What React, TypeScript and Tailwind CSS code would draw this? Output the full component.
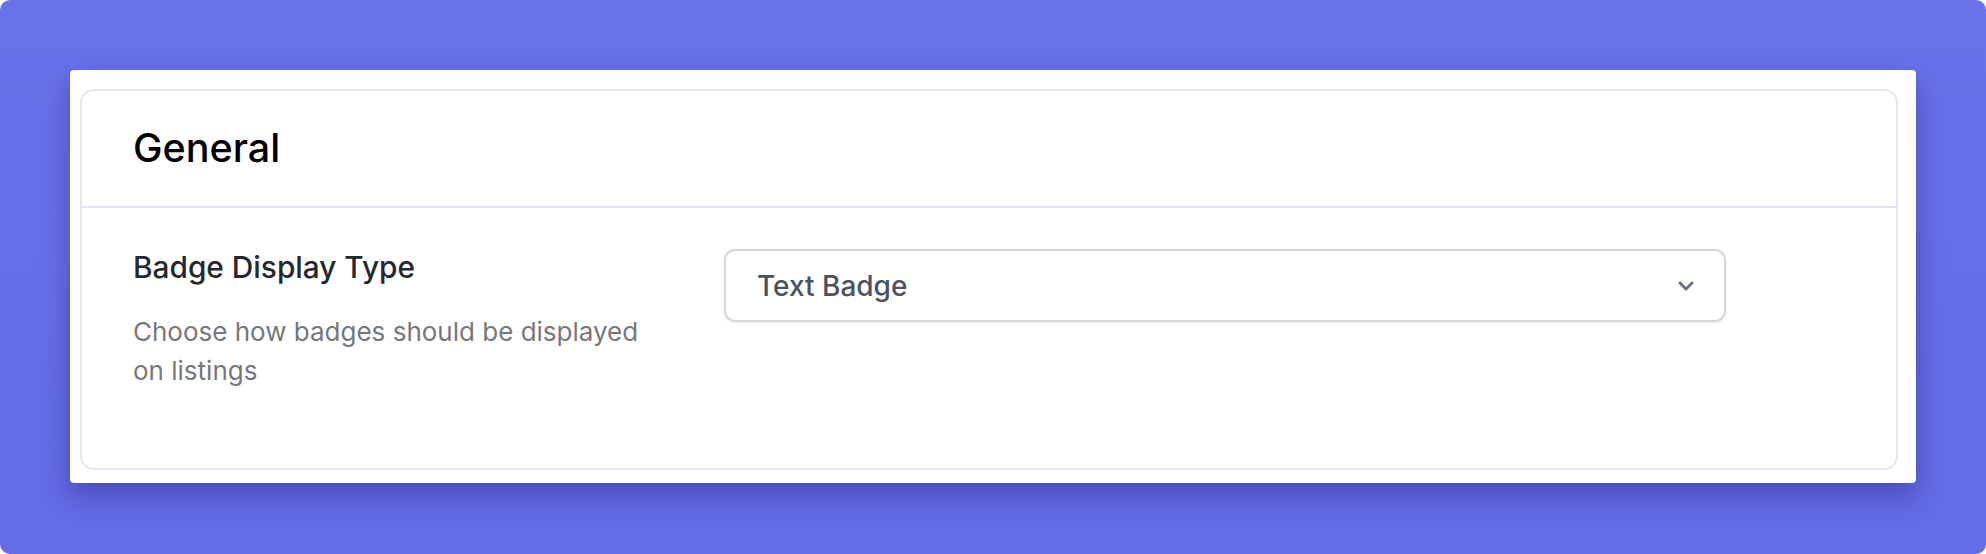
import React from "react";

export default function App() {
  return (
    <div className="w-[1986px] h-[554px] bg-white">
      <div className="w-[1986px] h-[554px] rounded-[10px] bg-gradient-to-b from-[#6a72ea] to-[#646ce6] pt-[70px] pl-[70px]">
        <div className="w-[1846px] h-[413px] rounded-[4px] bg-white pl-[10px] pt-[19px] pr-[18px] pb-[13px] flex shadow-[0_12px_28px_rgba(30,32,110,0.45)]">
          <div className="flex-1 flex flex-col border-2 border-[#e3e6ef] rounded-[14px] [font-family:Inter,'Noto_Sans',sans-serif]">
            <div className="h-[117px] shrink-0 border-b-2 border-[#e3e6ef] flex items-center px-[51px]">
              <h2 className="text-[39.5px] leading-none font-medium text-black">General</h2>
            </div>
            <div className="flex px-[51px] pt-[36px]">
              <div className="w-[520px] mr-[71px] shrink-0 mt-[3px]">
                <div className="text-[29.8px] leading-[40px] font-medium text-[#232830]">Badge Display Type</div>
                <p className="mt-[25px] text-[26px] leading-[39px] text-[#77777c]">
                  Choose how badges should be displayed on listings
                </p>
              </div>
              <div className="mt-[5px] w-[1002px] h-[73px] shrink-0 rounded-[11px] border-2 border-[#d3d7dd] bg-white shadow-[0_1px_3px_rgba(0,0,0,0.08)] flex items-center justify-between pl-[31px] pr-[30px]">
                <span className="text-[28px] font-medium text-[#4a5260]">Text Badge</span>
                <svg width="16" height="10" viewBox="0 0 16 10" fill="none">
                  <path d="M2 2l6 6 6-6" stroke="#6b7280" strokeWidth="3" strokeLinecap="round" strokeLinejoin="round" />
                </svg>
              </div>
            </div>
          </div>
        </div>
      </div>
    </div>
  );
}
